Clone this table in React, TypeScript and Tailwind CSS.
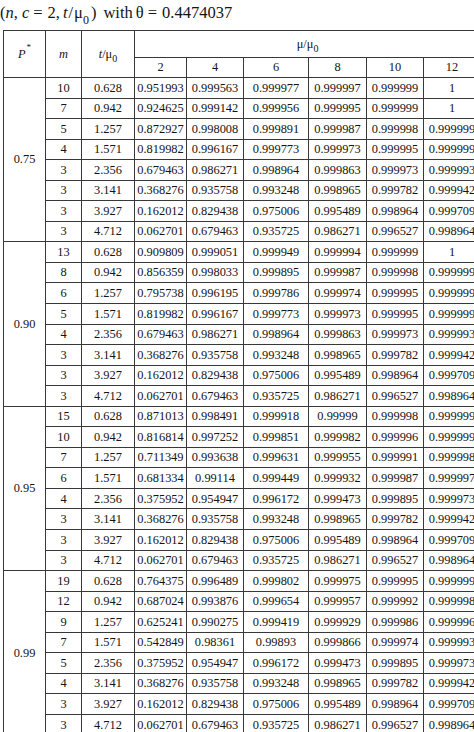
import React from "react";

type Group = {
  p: string;
  m: string[];
  cols: string[][];
};

const T = ["0.628", "0.942", "1.257", "1.571", "2.356", "3.141", "3.927", "4.712"];

const groups: Group[] = [
  {
    p: "0.75",
    m: ["10", "7", "5", "4", "3", "3", "3", "3"],
    cols: [
      ["0.951993", "0.924625", "0.872927", "0.819982", "0.679463", "0.368276", "0.162012", "0.062701"],
      ["0.999563", "0.999142", "0.998008", "0.996167", "0.986271", "0.935758", "0.829438", "0.679463"],
      ["0.999977", "0.999956", "0.999891", "0.999773", "0.998964", "0.993248", "0.975006", "0.935725"],
      ["0.999997", "0.999995", "0.999987", "0.999973", "0.999863", "0.998965", "0.995489", "0.986271"],
      ["0.999999", "0.999999", "0.999998", "0.999995", "0.999973", "0.999782", "0.998964", "0.996527"],
      ["1", "1", "0.999999", "0.999999", "0.999993", "0.999942", "0.999709", "0.998964"],
    ],
  },
  {
    p: "0.90",
    m: ["13", "8", "6", "5", "4", "3", "3", "3"],
    cols: [
      ["0.909809", "0.856359", "0.795738", "0.819982", "0.679463", "0.368276", "0.162012", "0.062701"],
      ["0.999051", "0.998033", "0.996195", "0.996167", "0.986271", "0.935758", "0.829438", "0.679463"],
      ["0.999949", "0.999895", "0.999786", "0.999773", "0.998964", "0.993248", "0.975006", "0.935725"],
      ["0.999994", "0.999987", "0.999974", "0.999973", "0.999863", "0.998965", "0.995489", "0.986271"],
      ["0.999999", "0.999998", "0.999995", "0.999995", "0.999973", "0.999782", "0.998964", "0.996527"],
      ["1", "0.999999", "0.999999", "0.999999", "0.999993", "0.999942", "0.999709", "0.998964"],
    ],
  },
  {
    p: "0.95",
    m: ["15", "10", "7", "6", "4", "3", "3", "3"],
    cols: [
      ["0.871013", "0.816814", "0.711349", "0.681334", "0.375952", "0.368276", "0.162012", "0.062701"],
      ["0.998491", "0.997252", "0.993638", "0.99114", "0.954947", "0.935758", "0.829438", "0.679463"],
      ["0.999918", "0.999851", "0.999631", "0.999449", "0.996172", "0.993248", "0.975006", "0.935725"],
      ["0.99999", "0.999982", "0.999955", "0.999932", "0.999473", "0.998965", "0.995489", "0.986271"],
      ["0.999998", "0.999996", "0.999991", "0.999987", "0.999895", "0.999782", "0.998964", "0.996527"],
      ["0.999999", "0.999999", "0.999998", "0.999997", "0.999973", "0.999942", "0.999709", "0.998964"],
    ],
  },
  {
    p: "0.99",
    m: ["19", "12", "9", "7", "5", "4", "3", "3"],
    cols: [
      ["0.764375", "0.687024", "0.625241", "0.542849", "0.375952", "0.368276", "0.162012", "0.062701"],
      ["0.996489", "0.993876", "0.990275", "0.98361", "0.954947", "0.935758", "0.829438", "0.679463"],
      ["0.999802", "0.999654", "0.999419", "0.99893", "0.996172", "0.993248", "0.975006", "0.935725"],
      ["0.999975", "0.999957", "0.999929", "0.999866", "0.999473", "0.998965", "0.995489", "0.986271"],
      ["0.999995", "0.999992", "0.999986", "0.999974", "0.999895", "0.999782", "0.998964", "0.996527"],
      ["0.999999", "0.999998", "0.999996", "0.999993", "0.999973", "0.999942", "0.999709", "0.998964"],
    ],
  },
];

const cell = "border border-[#383838] text-center align-middle p-0 leading-none";

export default function App() {
  return (
    <div
      className="w-[474px] h-[732px] overflow-hidden bg-white text-[#141414]"
      style={{ fontFamily: '"Liberation Serif", "Times New Roman", serif' }}
    >
      <div className="h-[30px] ml-[0px] pt-[3px] text-[16.5px] leading-[20px] whitespace-nowrap">
        <span>(</span>
        <i>n</i>
        <span>,</span>
        <i className="ml-[4px]">c</i>
        <span className="ml-[4px]">=</span>
        <span className="ml-[5px]">2,</span>
        <i className="ml-[3px]">t</i>
        <span className="ml-[1px]">/</span>
        <span className="ml-[1px]">μ</span>
        <sub className="text-[12px] align-[-3px]">0</sub>
        <span className="ml-[2px]">)</span>
        <span className="ml-[7px]">with</span>
        <span className="ml-[3px]">θ</span>
        <span className="ml-[4px]">=</span>
        <span className="ml-[5px]">0.4474037</span>
      </div>
      <table className="ml-[3px] border-collapse table-fixed w-[477px] text-[12.4px]">
        <colgroup>
          <col className="w-[42px]" />
          <col className="w-[36px]" />
          <col className="w-[53px]" />
          <col className="w-[52px]" />
          <col className="w-[57px]" />
          <col className="w-[65px]" />
          <col className="w-[58px]" />
          <col className="w-[57px]" />
          <col className="w-[57px]" />
        </colgroup>
        <thead>
          <tr className="h-[27px]">
            <td rowSpan={2} className={cell}>
              <i>P</i>
              <sup className="text-[9px] align-[3px] ml-[1px]">*</sup>
            </td>
            <td rowSpan={2} className={cell}>
              <i>m</i>
            </td>
            <td rowSpan={2} className={cell}>
              <i>t</i>/μ<sub className="text-[10px] align-[-2px]">0</sub>
            </td>
            <td colSpan={6} className={cell}>
              μ/μ<sub className="text-[10px] align-[-2px]">0</sub>
            </td>
          </tr>
          <tr className="h-[20px]">
            {["2", "4", "6", "8", "10", "12"].map((h) => (
              <td key={h} className={cell}>
                {h}
              </td>
            ))}
          </tr>
        </thead>
        <tbody>
          {groups.map((g) =>
            g.m.map((m, i) => (
              <tr key={g.p + i} className="h-[20.55px]">
                {i === 0 && (
                  <td rowSpan={8} className={cell}>
                    {g.p}
                  </td>
                )}
                <td className={cell}>{m}</td>
                <td className={cell}>{T[i]}</td>
                {g.cols.map((c, j) => (
                  <td key={j} className={cell}>
                    {c[i]}
                  </td>
                ))}
              </tr>
            ))
          )}
        </tbody>
      </table>
    </div>
  );
}
